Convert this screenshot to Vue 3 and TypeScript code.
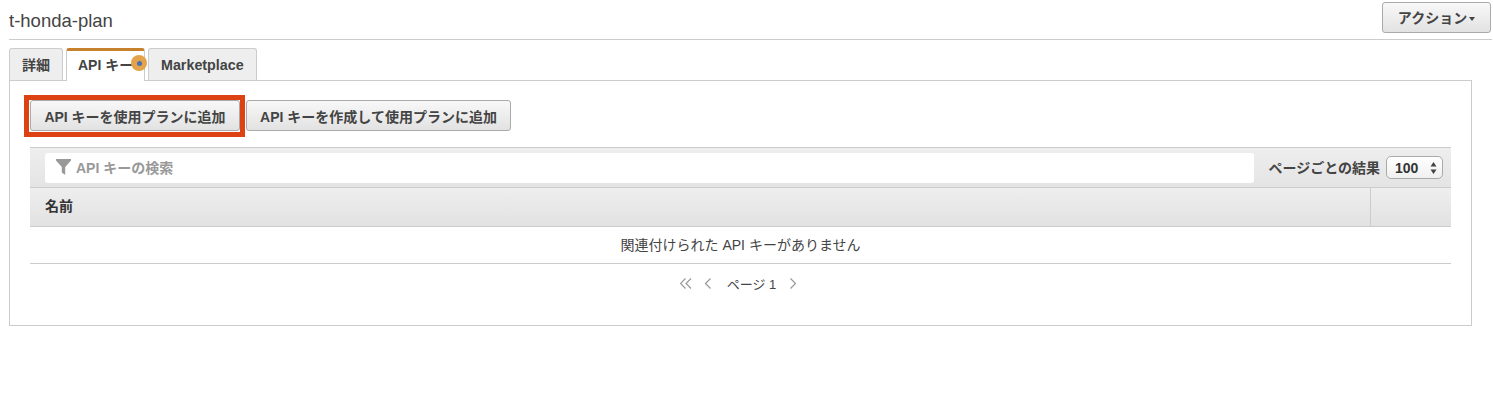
<script setup lang="ts">
const tabs = ['詳細', 'API キー', 'Marketplace']
const activeTab = 'API キー'
</script>

<template>
  <div class="page">
    <header class="head">
      <h1 class="title">t-honda-plan</h1>
      <button class="btn action">アクション<i class="caret"></i></button>
    </header>

    <nav class="tabs">
      <a v-for="tab in tabs" :key="tab" class="tab" :class="{ active: tab === activeTab }">
        {{ tab }}
        <span v-if="tab === activeTab" class="pulse"><i></i></span>
      </a>
    </nav>

    <section class="panel">
      <div class="buttons">
        <div class="highlighted">
          <button class="btn add">API キーを使用プランに追加</button>
          <span class="red-box"></span>
        </div>
        <button class="btn create">API キーを作成して使用プランに追加</button>
      </div>

      <div class="table">
        <div class="filter">
          <div class="search">
            <svg class="funnel" width="15" height="16" viewBox="0 0 15 16">
              <path d="M0 0h15v1.4L9.2 8v8L5.8 13.4V8L0 1.4z" fill="#999" />
            </svg>
            <span>API キーの検索</span>
          </div>
          <label class="per-page">ページごとの結果</label>
          <div class="select">
            <span>100</span>
            <svg width="7" height="14" viewBox="0 0 7 14">
              <path d="M3.5 1L6.5 5.6H.5zM3.5 13L.5 8.4h6z" fill="#444" />
            </svg>
          </div>
        </div>
        <div class="thead">
          <div class="th name">名前</div>
          <div class="th extra"></div>
        </div>
        <div class="empty">関連付けられた API キーがありません</div>
        <div class="pager">
          <svg class="first" width="12" height="11" viewBox="0 0 12 11" fill="none" stroke="#999" stroke-width="1.2">
            <path d="M5.5 .5l-5 5 5 5M11 .5l-5 5 5 5" />
          </svg>
          <svg class="prev" width="7" height="11" viewBox="0 0 7 11" fill="none" stroke="#999" stroke-width="1.2">
            <path d="M6.5 .5l-5 5 5 5" />
          </svg>
          <span class="page-no">ページ 1</span>
          <svg width="7" height="11" viewBox="0 0 7 11" fill="none" stroke="#999" stroke-width="1.2">
            <path d="M.5 .5l5 5-5 5" />
          </svg>
        </div>
      </div>
    </section>
  </div>
</template>

<style>
body {
  background: #fff;
}
</style>

<style scoped>
.page {
  height: 402px;
  padding: 2px 1px 0 9px;
  box-sizing: border-box;
  font-family: "Liberation Sans", "Noto Sans CJK JP", sans-serif;
  font-size: 14px;
  color: #444;
  overflow: hidden;
}

.head {
  display: flex;
  justify-content: space-between;
  align-items: flex-start;
  height: 37px;
  border-bottom: 1px solid #ccc;
}

.title {
  margin: 9px 0 0;
  font-size: 18.5px;
  line-height: 20px;
  font-weight: 400;
  color: #444;
}

.btn {
  display: block;
  box-sizing: border-box;
  height: 31px;
  padding: 1px 0 0;
  border: 1px solid #aaa;
  border-radius: 3px;
  background: linear-gradient(#f8f8f8, #e2e2e2);
  font-family: inherit;
  font-size: 14px;
  font-weight: 700;
  color: #444;
}

.action {
  width: 109px;
  margin-right: 1px;
  padding: 0 0 2px;
}

.caret {
  display: inline-block;
  margin-left: 2px;
  vertical-align: 2px;
  border-top: 4px solid #444;
  border-left: 3.5px solid transparent;
  border-right: 3.5px solid transparent;
}

.tabs {
  display: flex;
  margin-top: 8px;
  height: 33px;
  align-items: flex-start;
  position: relative;
  z-index: 1;
}

.tab {
  box-sizing: border-box;
  position: relative;
  height: 32px;
  padding: 8px 12px 0;
  margin-right: 3px;
  border: 1px solid #ccc;
  border-bottom: 0;
  border-radius: 3px 3px 0 0;
  background: #eee;
  font-weight: 700;
  line-height: 16px;
  white-space: nowrap;
}

.active {
  height: 33px;
  width: 79px;
  padding: 6px 11px 0;
  margin: 0 3px 0 0;
  border-top: 3px solid #c7812c;
  background: #fff;
}

.tab:first-child {
  width: 54px;
  margin-right: 3px;
}

.tab:last-child {
  width: 109px;
  padding-left: 12px;
  margin-right: 0;
  font-size: 14.3px;
}

.pulse {
  position: absolute;
  left: 64px;
  top: 4px;
  width: 16px;
  height: 16px;
  border-radius: 50%;
  background: #e3a34a;
  display: flex;
  align-items: center;
  justify-content: center;
}

.pulse i {
  width: 5px;
  height: 5px;
  border-radius: 50%;
  background: #4a6fb5;
}

.panel {
  box-sizing: border-box;
  width: 1463px;
  height: 246px;
  margin-top: -1px;
  padding: 19px 20px;
  border: 1px solid #ccc;
}

.buttons {
  display: flex;
  gap: 6px;
}

.highlighted {
  position: relative;
}

.add {
  width: 210px;
}

.create {
  width: 265px;
}

.red-box {
  position: absolute;
  inset: -5px -5px -6px -6px;
  border: 5px solid #dd4215;
  pointer-events: none;
}

.table {
  margin-top: 16px;
  width: 1421px;
}

.filter {
  box-sizing: border-box;
  display: flex;
  align-items: center;
  height: 41px;
  padding: 0 8px 0 15px;
  border-top: 1px solid #ccc;
  border-bottom: 1px solid #ccc;
  background: linear-gradient(#eee, #e4e4e4);
}

.search {
  box-sizing: border-box;
  display: flex;
  align-items: center;
  gap: 5px;
  width: 1210px;
  height: 30px;
  padding: 0 0 2px 11px;
  border-radius: 3px;
  background: #fff;
  font-weight: 700;
  color: #999;
}

.per-page {
  margin-left: 14px;
  padding-bottom: 2px;
  font-weight: 700;
  white-space: nowrap;
}

.select {
  box-sizing: border-box;
  display: flex;
  align-items: center;
  justify-content: space-between;
  width: 57px;
  height: 23px;
  margin-left: 6px;
  padding: 0 5px 0 8px;
  border: 1px solid #aaa;
  border-radius: 5px;
  background: linear-gradient(#fff, #f0f0f0);
  font-weight: 700;
  color: #333;
}

.thead {
  display: flex;
  height: 38px;
  border-bottom: 1px solid #ccc;
  background: linear-gradient(#eee, #e2e2e2);
}

.th {
  box-sizing: border-box;
  line-height: 37px;
  font-weight: 700;
  color: #333;
}

.name {
  flex: 1;
  padding-left: 15px;
}

.extra {
  width: 81px;
  border-left: 1px solid #ccc;
}

.empty {
  height: 36px;
  line-height: 36px;
  text-align: center;
  border-bottom: 1px solid #ccc;
}

.pager {
  display: flex;
  align-items: center;
  justify-content: center;
  height: 40px;
  padding: 0 4px 1px 0;
  box-sizing: border-box;
  color: #444;
}

.prev {
  margin-left: 12px;
}

.page-no {
  margin: 0 14px 0 16px;
  font-size: 13px;
}
</style>
